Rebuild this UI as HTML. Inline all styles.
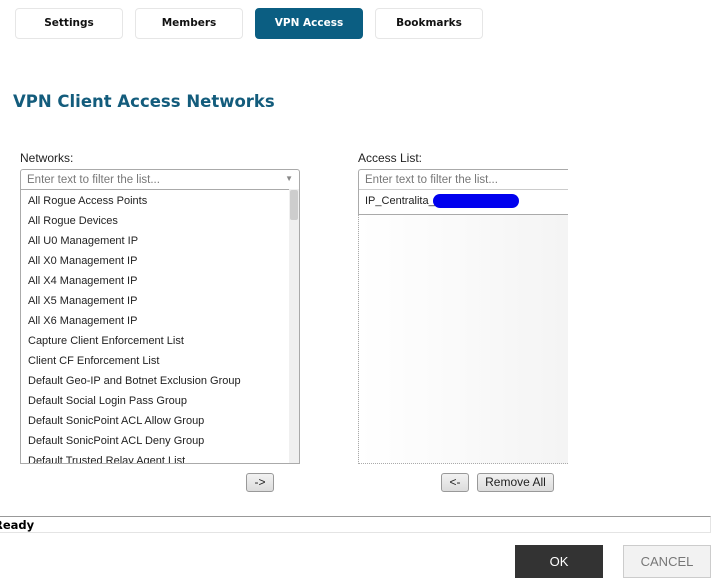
<!DOCTYPE html><html><head><style>
body{margin:0;width:719px;height:583px;background:#fff;position:relative;overflow:hidden;font-family:"Liberation Sans",sans-serif}
.a{position:absolute;box-sizing:border-box}
.tab{border:1px solid #e6e6e6;border-radius:4px;font:bold 10.5px "DejaVu Sans",sans-serif;text-align:center;line-height:29px;color:#111;top:8px;height:31px;width:108px}
.row{position:absolute;left:7px;font-size:11px;color:#222;height:20px;line-height:20px}
.btn{border:1px solid #999;border-radius:3px;background:linear-gradient(#f2f2f2,#dcdcdc);font-size:12px;text-align:center;line-height:16px;color:#222}
</style></head><body>
<div class="a tab" style="left:15px">Settings</div>
<div class="a tab" style="left:135px">Members</div>
<div class="a tab" style="left:255px;background:#0b5e82;border-color:#0b5e82;color:#fff">VPN Access</div>
<div class="a tab" style="left:375px">Bookmarks</div>
<div class="a" style="left:13px;top:92px;font:bold 16.5px 'DejaVu Sans',sans-serif;color:#135c7c">VPN Client Access Networks</div>
<div class="a" style="left:20px;top:151px;font-size:12px;color:#222">Networks:</div>
<div class="a" style="left:20px;top:169px;width:280px;height:21px;border:1px solid #aaa;border-radius:3px 3px 0 0;font-size:11.5px;color:#777;padding:4px 6px">Enter text to filter the list...<span style="position:absolute;right:6px;top:4px;font-size:8px;color:#888">▼</span></div>
<div class="a" style="left:20px;top:189px;width:280px;height:275px;border:1px solid #aaa;border-top:none;overflow:hidden">
<div class="a" style="right:0;top:0;width:10px;height:274px;background:#f0f0f0"></div>
<div class="a" style="right:1px;top:1px;width:8px;height:30px;background:#cdcdcd;border-radius:2px"></div>
<div style="position:absolute;left:0;top:2px;width:100%">
<div class="row" style="top:0">All Rogue Access Points</div>
<div class="row" style="top:20px">All Rogue Devices</div>
<div class="row" style="top:40px">All U0 Management IP</div>
<div class="row" style="top:60px">All X0 Management IP</div>
<div class="row" style="top:80px">All X4 Management IP</div>
<div class="row" style="top:100px">All X5 Management IP</div>
<div class="row" style="top:120px">All X6 Management IP</div>
<div class="row" style="top:140px">Capture Client Enforcement List</div>
<div class="row" style="top:160px">Client CF Enforcement List</div>
<div class="row" style="top:180px">Default Geo-IP and Botnet Exclusion Group</div>
<div class="row" style="top:200px">Default Social Login Pass Group</div>
<div class="row" style="top:220px">Default SonicPoint ACL Allow Group</div>
<div class="row" style="top:240px">Default SonicPoint ACL Deny Group</div>
<div class="row" style="top:260px">Default Trusted Relay Agent List</div>
</div>
</div>
<div class="a" style="left:358px;top:151px;font-size:12px;color:#222">Access List:</div>
<div class="a" style="left:358px;top:190px;width:210px;height:274px;border-left:1px dotted #aaa;border-bottom:1px dotted #aaa;background:linear-gradient(90deg,#fff,#f4f4f4)"></div>
<div class="a" style="left:358px;top:169px;width:210px;height:46px;border:1px solid #aaa;border-right:none;border-radius:3px 0 0 0;background:#fff"></div>
<div class="a" style="left:359px;top:189px;width:209px;height:1px;background:#ccc"></div>
<div class="a" style="left:365px;top:174px;font-size:11.5px;color:#777">Enter text to filter the list...</div>
<div class="a" style="left:365px;top:195px;font-size:11px;color:#222">IP_Centralita_</div>
<div class="a" style="left:433px;top:194px;width:86px;height:14px;background:#0000ee;border-radius:7px"></div>
<div class="a btn" style="left:246px;top:473px;width:28px;height:19px">-&gt;</div>
<div class="a btn" style="left:441px;top:473px;width:28px;height:19px">&lt;-</div>
<div class="a btn" style="left:477px;top:473px;width:77px;height:19px">Remove All</div>
<div class="a" style="left:-2px;top:516px;width:713px;height:17px;border-top:1px solid #999;border-bottom:1px solid #e4e4e4;border-right:1px solid #e4e4e4;font:bold 11.5px 'DejaVu Sans',sans-serif;line-height:16px;text-indent:-4px">Ready</div>
<div class="a" style="left:515px;top:545px;width:88px;height:33px;background:#333;color:#fff;font-size:13px;text-align:center;line-height:33px">OK</div>
<div class="a" style="left:623px;top:545px;width:88px;height:33px;background:#f2f2f2;border:1px solid #ccc;color:#777;font-size:13px;text-align:center;line-height:31px">CANCEL</div>
</body></html>
